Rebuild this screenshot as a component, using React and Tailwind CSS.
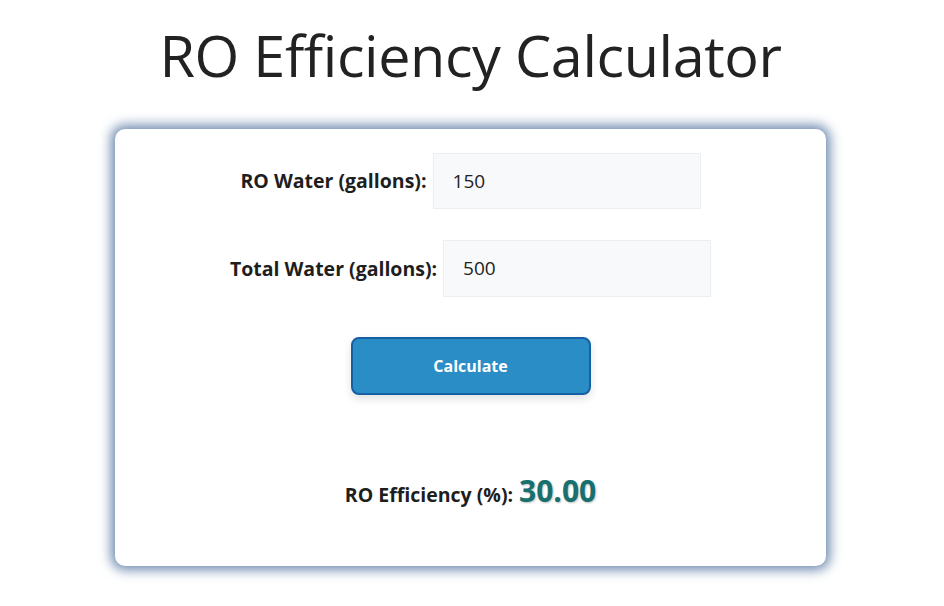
export default function App() {
  const font = { fontFamily: '"Open Sans", "Noto Sans", sans-serif' };
  return (
    <div className="w-[944px] h-[606px] bg-white flex flex-col items-center pr-[3px] text-[#222]" style={font}>
      <h1 className="mt-[17px] h-[76px] text-[57.5px] leading-[76px] font-normal text-[#222] tracking-[-0.4px]">RO Efficiency Calculator</h1>
      <div className="mt-[36px] w-[711px] h-[437px] bg-white rounded-[10px] shadow-[0_0_12px_4px_rgba(75,110,155,0.8)] flex flex-col items-center pt-[24px]">
        <div className="flex items-center gap-[6px]">
          <label className="text-[19.5px] leading-[28px] font-bold text-[#1e1e1e]">RO Water (gallons):</label>
          <div className="w-[268px] h-[56px] bg-[#f8f9fa] border border-[#eceef0] flex items-center pl-[19px] text-[19px] text-[#222]">150</div>
        </div>
        <div className="flex items-center gap-[6px] mt-[31px]">
          <label className="text-[19.5px] leading-[28px] font-bold text-[#1e1e1e]">Total Water (gallons):</label>
          <div className="w-[268px] h-[57px] bg-[#f8f9fa] border border-[#eceef0] flex items-center pl-[19px] text-[19px] text-[#222]">500</div>
        </div>
        <button className="mt-[40px] w-[240px] h-[58px] rounded-[8px] bg-[#2b8dc6] border-2 border-[#155fa3] text-white font-bold text-[16px] shadow-[0_4px_8px_rgba(0,0,0,0.12)]">Calculate</button>
        <div className="mt-[76px] h-[40px] flex items-baseline gap-[6px]">
          <span className="text-[19.5px] leading-[40px] font-bold text-[#1e1e1e]">RO Efficiency (%):</span>
          <span className="text-[30px] leading-[40px] font-bold text-[#17706e] [text-shadow:1px_1px_2px_rgba(0,0,0,0.25)]">30.00</span>
        </div>
      </div>
    </div>
  );
}
